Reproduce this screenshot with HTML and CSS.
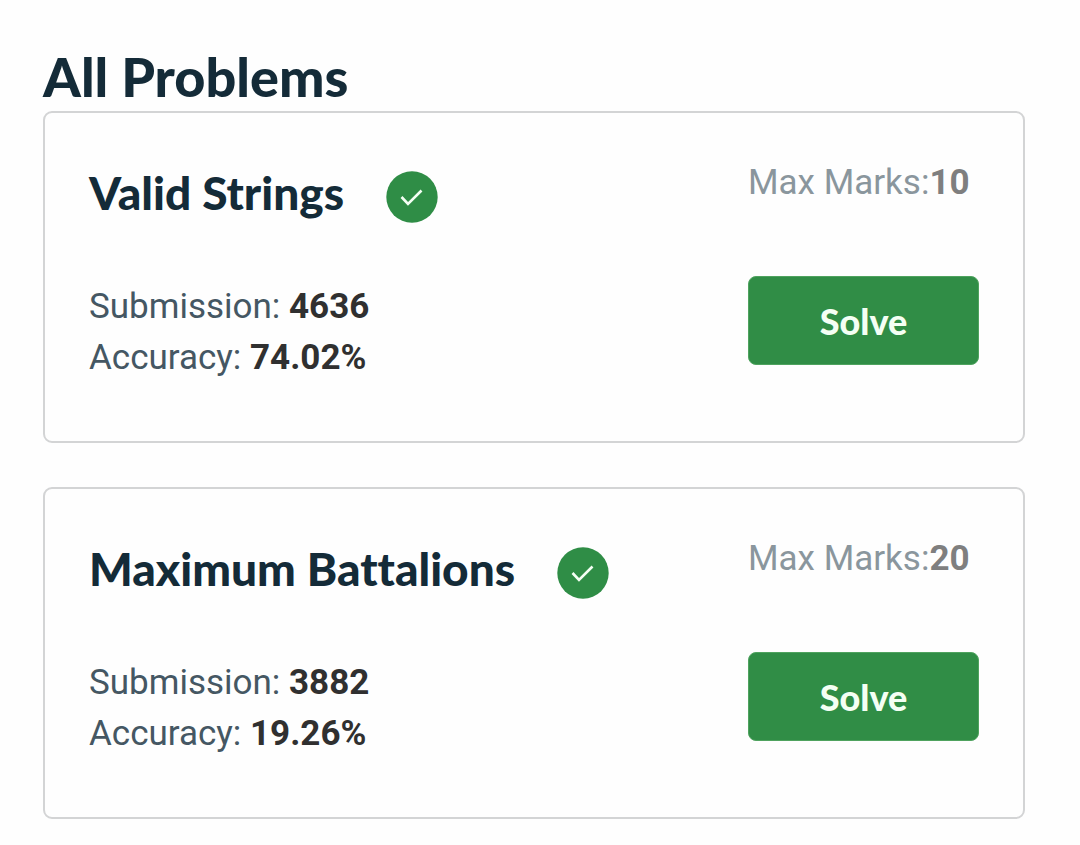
FILE: index.html
```html
<!DOCTYPE html>
<html lang="en">
<head>
    <meta charset="UTF-8">
    <meta name="viewport" content="width=device-width, initial-scale=1.0">
    <title>All Problems</title>
    <link rel="stylesheet" href="styles.css">
</head>
<body>
    <main class="problems">
        <h1 class="page-title">All Problems</h1>
        <div class="problem-list">
            <article class="problem-card">
                <div class="problem-header">
                    <h2 class="problem-name">Valid Strings</h2>
                    <svg class="solved-icon" viewBox="0 0 52 52" role="img" aria-label="Solved">
                        <circle cx="26" cy="26" r="25.700" fill="#2f8d46"/>
                        <path d="M15.500 26l6.500 7L35.500 19.500" fill="none" stroke="#f4fff4" stroke-width="2.600"/>
                    </svg>
                </div>
                <p class="marks">Max Marks:<strong>10</strong></p>
                <div class="stats">
                    <p>Submission: <strong>4636</strong></p>
                    <p>Accuracy: <strong>74.02%</strong></p>
                </div>
                <button class="solve-button" type="button">Solve</button>
            </article>
            <article class="problem-card">
                <div class="problem-header">
                    <h2 class="problem-name">Maximum Battalions</h2>
                    <svg class="solved-icon" viewBox="0 0 52 52" role="img" aria-label="Solved">
                        <circle cx="26" cy="26" r="25.700" fill="#2f8d46"/>
                        <path d="M15.500 26l6.500 7L35.500 19.500" fill="none" stroke="#f4fff4" stroke-width="2.600"/>
                    </svg>
                </div>
                <p class="marks">Max Marks:<strong>20</strong></p>
                <div class="stats">
                    <p>Submission: <strong>3882</strong></p>
                    <p>Accuracy: <strong>19.26%</strong></p>
                </div>
                <button class="solve-button" type="button">Solve</button>
            </article>
        </div>
    </main>
</body>
</html>
```
FILE: styles.css
```css
* {
    box-sizing: border-box;
}
body {
    margin: 0;
    background-color: #fefefe;
    font-family: Roboto, "Liberation Sans", sans-serif;
}
h1, h2, p {
    margin: 0;
}
.problems {
    padding: 43px 55px 24px 43px;
}
.page-title {
    color: #142b38;
    font-family: Lato, sans-serif;
    font-size: 54px;
    line-height: 68px;
    font-weight: 900;
}
.problem-list {
    display: flex;
    flex-direction: column;
    gap: 44px;
}
.problem-card {
    display: grid;
    grid-template-columns: 1fr 231px;
    row-gap: 53px;
    align-items: start;
    padding: 44px 44px 58px;
    border: 2px solid #d3d4d5;
    border-radius: 9px;
}
.problem-header {
    display: flex;
    align-items: flex-end;
    gap: 42px;
    padding-top: 14px;
}
.problem-name {
    padding-bottom: 8px;
    color: #142b38;
    font-family: Lato, sans-serif;
    font-size: 46px;
    line-height: 44px;
    font-weight: 900;
    font-variant-ligatures: none;
}
.solved-icon {
    width: 52px;
    height: 52px;
}
.marks {
    color: #8a969d;
    font-size: 35px;
    line-height: 51px;
}
.marks strong {
    color: #7f7f7f;
}
.stats {
    color: #455763;
    font-size: 35px;
    line-height: 51px;
    padding-top: 5px;
}
.stats strong {
    color: #303030;
}
.solve-button {
    width: 100%;
    height: 89px;
    border: 1px solid #4fa35f;
    border-radius: 8px;
    background-color: #308d46;
    color: #f4fff4;
    font-family: Lato, sans-serif;
    font-size: 36px;
    font-weight: 900;
    cursor: pointer;
}
```
